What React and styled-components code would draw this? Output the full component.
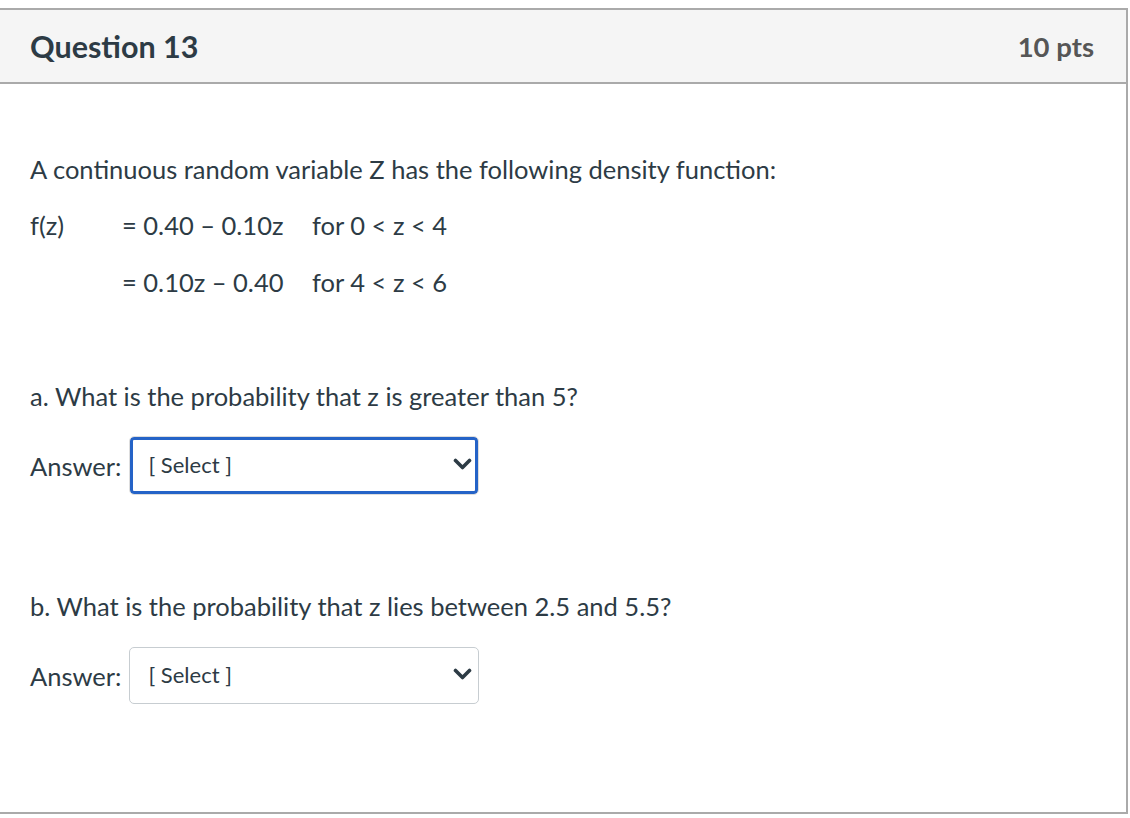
import React from 'react'
import styled, { createGlobalStyle } from 'styled-components'

const GlobalStyle = createGlobalStyle`
  html, body {
    margin: 0;
    padding: 0;
    background: #ffffff;
  }
  body {
    font-family: Lato, 'Open Sans', 'Liberation Sans', sans-serif;
    color: #2d3b45;
  }
`

const Page = styled.div`
  padding-top: 8px;
  width: 1130px;
  height: 818px;
  box-sizing: border-box;
  overflow: hidden;
`

const Card = styled.div`
  width: 1128px;
  box-sizing: border-box;
  border: 2px solid #aaaaaa;
  border-left: 0;
`

const Header = styled.div`
  display: flex;
  align-items: center;
  justify-content: space-between;
  height: 72px;
  padding: 0 32px 0 30px;
  background: #f5f5f5;
  border-bottom: 2px solid #aaaaaa;
`

const Title = styled.h2`
  margin: 0;
  font-size: 30.5px;
  font-weight: 700;
  color: #2d3b45;
`

const Points = styled.div`
  font-size: 27.5px;
  font-weight: 700;
  color: #565656;
`

const Body = styled.div`
  padding: 67px 30px 108px 30px;
  font-size: 25.5px;
  line-height: 36px;
`

const Para = styled.p`
  margin: 0;
  margin-top: ${(p) => p.$gap || 0}px;
`

const Formula = styled.div`
  display: grid;
  grid-template-columns: 92px 190px auto;
  row-gap: 21px;
  margin-top: 20px;
`

const AnswerRow = styled.div`
  display: flex;
  align-items: center;
  gap: 8px;
  margin-top: ${(p) => p.$gap}px;
`

const SelectBox = styled.div`
  display: flex;
  align-items: center;
  justify-content: space-between;
  width: 350px;
  height: ${(p) => (p.$focused ? 59 : 57)}px;
  box-sizing: border-box;
  padding: 0 6px 2px 18px;
  border: 1px solid ${(p) => (p.$focused ? '#dddddd' : '#c7cdd1')};
  border-radius: 5px;
  box-shadow: ${(p) => (p.$focused ? 'inset 0 0 0 3px #2563c7' : 'none')};
  background: #ffffff;
  font-size: 22px;
  color: #2d3b45;
`

const Chevron = () => (
  <svg width="19" height="13" viewBox="0 0 19 13">
    <path d="M2.5 2.5 L9.5 9.5 L16.5 2.5" fill="none" stroke="#2d3b45" strokeWidth="3.6" strokeLinecap="round" strokeLinejoin="round" />
  </svg>
)

const Select = ({ focused }) => (
  <SelectBox $focused={focused}>
    <span>[ Select ]</span>
    <Chevron />
  </SelectBox>
)

export default function App() {
  return (
    <Page>
      <GlobalStyle />
      <Card>
        <Header>
          <Title>Question 13</Title>
          <Points>10 pts</Points>
        </Header>
        <Body>
          <Para>A continuous random variable Z has the following density function:</Para>
          <Formula>
            <span>f(z)</span>
            <span>= 0.40 – 0.10z</span>
            <span>for 0 &lt; z &lt; 4</span>
            <span />
            <span>= 0.10z – 0.40</span>
            <span>for 4 &lt; z &lt; 6</span>
          </Formula>
          <Para $gap={78}>a. What is the probability that z is greater than 5?</Para>
          <AnswerRow $gap={22}>
            <span>Answer:</span>
            <Select focused />
          </AnswerRow>
          <Para $gap={93}>b. What is the probability that z lies between 2.5 and 5.5?</Para>
          <AnswerRow $gap={23}>
            <span>Answer:</span>
            <Select />
          </AnswerRow>
        </Body>
      </Card>
    </Page>
  )
}
